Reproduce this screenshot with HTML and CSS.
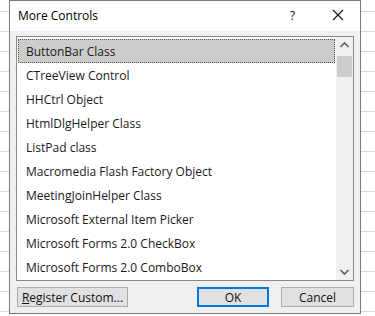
FILE: index.html
```html
<!DOCTYPE html>
<html lang="en">
<head>
  <meta charset="UTF-8">
  <title>More Controls</title>
  <link rel="stylesheet" href="styles.css">
</head>
<body>
  <div class="dlg">
    <div class="titlebar">
      <span class="caption">More Controls</span>
      <span class="help">?</span>
      <span class="close">
        <svg width="12" height="12" viewBox="0 0 12 12"><path d="M1 1L11 11M11 1L1 11" stroke="#111" stroke-width="1.1" fill="none"/></svg>
      </span>
    </div>
    <div class="body">
      <div class="listbox">
        <ul class="items">
          <li class="sel">ButtonBar Class</li>
          <li>CTreeView Control</li>
          <li>HHCtrl Object</li>
          <li>HtmlDlgHelper Class</li>
          <li>ListPad class</li>
          <li>Macromedia Flash Factory Object</li>
          <li>MeetingJoinHelper Class</li>
          <li>Microsoft External Item Picker</li>
          <li>Microsoft Forms 2.0 CheckBox</li>
          <li>Microsoft Forms 2.0 ComboBox</li>
        </ul>
        <div class="sbar">
          <svg class="arr" width="17" height="17" viewBox="0 0 17 17"><path d="M4.5 10L8.5 6L12.5 10" stroke="#606060" stroke-width="1.6" fill="none"/></svg>
          <div class="thumb"></div>
          <div class="track"></div>
          <svg class="arr" width="17" height="17" viewBox="0 0 17 17"><path d="M4.5 7L8.5 11L12.5 7" stroke="#606060" stroke-width="1.6" fill="none"/></svg>
        </div>
      </div>
      <div class="btns">
        <button class="btn reg"><u>R</u>egister Custom...</button>
        <span class="gap"></span>
        <button class="btn ok">OK</button>
        <button class="btn">Cancel</button>
      </div>
    </div>
  </div>
</body>
</html>
```

FILE: styles.css
```css
*{
  margin: 0;
  padding: 0;
  box-sizing: border-box;
}
body{
  width: 375px;
  height: 316px;
  overflow: hidden;
  background: repeating-linear-gradient(to bottom, #fff 0 11px, #d9d9d9 11px 12px, #fff 12px 20px);
  font-family: "Segoe UI", "Open Sans", "Noto Sans", sans-serif;
  font-size: 12px;
  color: #1a1a1a;
}
.dlg{
  width: 352px;
  height: 314px;
  margin-left: 9px;
  border: 1px solid #7a7a7a;
  background: #f0f0f0;
  display: flex;
  flex-direction: column;
}
.titlebar{
  height: 30px;
  background: #fff;
  display: flex;
  align-items: center;
  padding: 0 0 2px 8px;
}
.caption{
  flex: 1;
  color: #000;
}
.help{
  width: 14px;
  margin-right: 28px;
  color: #111;
}
.close{
  width: 12px;
  height: 12px;
  margin-right: 16px;
  display: flex;
}
.body{
  flex: 1;
  padding: 5px 6px 0 6px;
  display: flex;
  flex-direction: column;
}
.listbox{
  height: 245px;
  border: 1px solid #828790;
  background: #fff;
  display: flex;
}
.items{
  flex: 1;
  list-style: none;
  padding: 2px 1px 0 1px;
  overflow: hidden;
}
.items li{
  height: 24px;
  line-height: 24px;
  padding-left: 7px;
  border: 1px solid transparent;
  white-space: nowrap;
}
.items li.sel{
  background: #cccccc;
  border: 1px dotted #555;
}
.sbar{
  width: 17px;
  background: #f0f0f0;
  display: flex;
  flex-direction: column;
}
.arr{
  display: block;
  flex: none;
}
.thumb{
  height: 21px;
  margin: 2px 1px 0;
  background: #cdcdcd;
}
.track{
  flex: 1;
}
.btns{
  display: flex;
  margin-top: 6px;
  padding-left: 1px;
}
.gap{
  flex: 1;
}
.btn{
  height: 20px;
  border: 1px solid #adadad;
  background: #e1e1e1;
  font-family: inherit;
  font-size: 12px;
  color: #111;
}
.btn.reg{
  width: 111px;
}
.btn.ok{
  width: 72px;
  margin-right: 12px;
  border: 2px solid #0078d7;
}
.btns .btn:last-child{
  width: 73px;
}
```
